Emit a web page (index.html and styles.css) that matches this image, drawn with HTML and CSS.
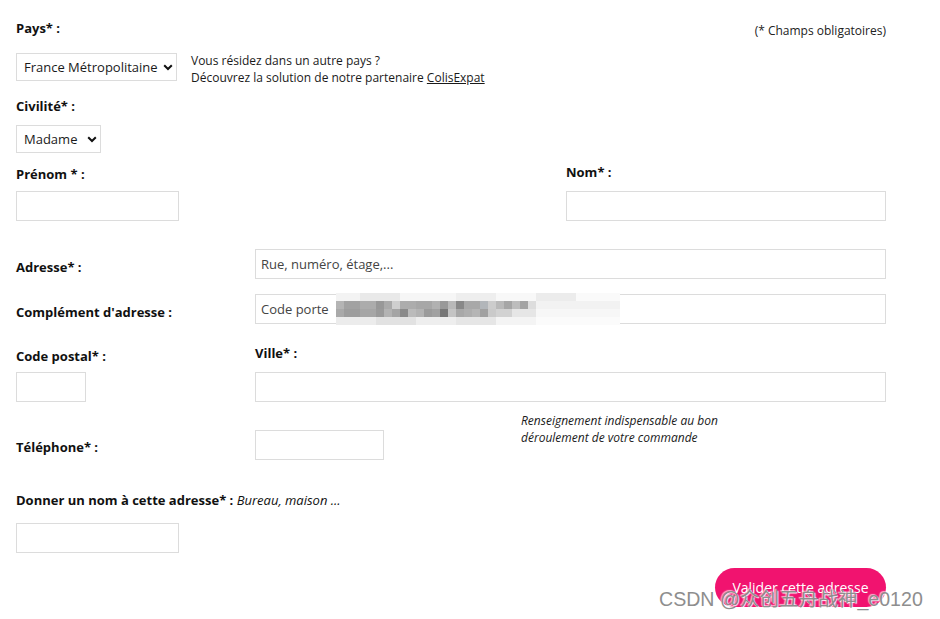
FILE: index.html
```html
<!DOCTYPE html>
<html lang="fr">
<head>
<meta charset="utf-8">
<title>Adresse</title>
<link rel="stylesheet" href="styles.css">
</head>
<body>
<form class="form">
  <div class="head">
    <span class="label">Pays* :</span>
    <span class="required">(* Champs obligatoires)</span>
  </div>

  <div class="country">
    <div class="select select-country">
      <span>France Métropolitaine</span>
      <svg class="chev" width="10" height="7" viewBox="0 0 10 7"><polyline points="1.2,1.2 5,5 8.8,1.2" fill="none" stroke="#111" stroke-width="2"/></svg>
    </div>
    <p class="abroad">Vous résidez dans un autre pays ?<br>Découvrez la solution de notre partenaire <a href="#">ColisExpat</a></p>
  </div>

  <div class="label civ">Civilité* :</div>
  <div class="select select-civ">
    <span>Madame</span>
    <svg class="chev" width="10" height="7" viewBox="0 0 10 7"><polyline points="1.2,1.2 5,5 8.8,1.2" fill="none" stroke="#111" stroke-width="2"/></svg>
  </div>

  <div class="names">
    <div class="field">
      <div class="label label-prenom">Prénom * :</div>
      <input class="input w-name" type="text">
    </div>
    <div class="field">
      <div class="label label-nom">Nom* :</div>
      <input class="input w-nom" type="text">
    </div>
  </div>

  <div class="row row-address">
    <div class="label row-label">Adresse* :</div>
    <input class="input w-full" type="text" placeholder="Rue, numéro, étage,...">
  </div>

  <div class="row row-compl">
    <div class="label row-label">Complément d'adresse :</div>
    <div class="compl">
      <input class="input w-full" type="text" placeholder="Code porte">
      <div class="blur">
        <div class="b b1"></div>
        <div class="b b2"></div>
        <div class="b b3"></div>
        <div class="b b4"></div>
      </div>
    </div>
  </div>

  <div class="row row-city">
    <div class="field">
      <div class="label label-cp">Code postal* :</div>
      <input class="input w-cp" type="text">
    </div>
    <div class="field">
      <div class="label label-ville">Ville* :</div>
      <input class="input w-full" type="text">
    </div>
  </div>

  <div class="row-phone">
    <div class="label phone-label">Téléphone* :</div>
    <input class="input w-phone" type="text">
    <p class="note">Renseignement indispensable au bon<br>déroulement de votre commande</p>
  </div>

  <div class="label alias-label">Donner un nom à cette adresse* : <em>Bureau, maison ...</em></div>
  <input class="input w-name" type="text">

  <div class="actions">
    <button class="btn" type="button">Valider cette adresse</button>
  </div>
</form>
<div class="wm">CSDN @众创五舟战神_e0120</div>
</body>
</html>
```

FILE: styles.css
```css
* { box-sizing: border-box; }

html, body {
  margin: 0;
  padding: 0;
  background: #fff;
}

body {
  font-family: "Open Sans", "Noto Sans", sans-serif;
  color: #1a1a1a;
  width: 940px;
  height: 619px;
  overflow: hidden;
  position: relative;
}

.form {
  width: 886px;
  padding: 19px 0 0 16px;
}

.label {
  font-size: 13px;
  font-weight: 700;
  line-height: 18px;
  color: #111;
}

.head {
  display: flex;
  justify-content: space-between;
  align-items: flex-start;
  height: 18px;
}

.required {
  font-size: 12px;
  line-height: 16px;
  margin-top: 4px;
  color: #222;
}

.country {
  display: flex;
  align-items: flex-start;
  margin-top: 16px;
}

.select {
  height: 28px;
  border: 1px solid #dcdcdc;
  display: flex;
  align-items: center;
  justify-content: space-between;
  padding: 0 3px 0 7px;
  font-size: 13px;
  color: #1a1a1a;
  background: #fff;
}

.chev { display: block; }

.select-country { width: 161px; }
.select-civ { width: 85px; margin-top: 10px; }

.abroad {
  margin: -1px 0 0 14px;
  font-size: 12px;
  line-height: 17px;
  color: #1a1a1a;
}

.abroad a { color: #1a1a1a; text-decoration: underline; }

.civ { margin-top: 11px; }

.input {
  display: block;
  height: 30px;
  border: 1px solid #dcdcdc;
  border-radius: 0;
  padding: 0 5px;
  font-family: "Open Sans", "Noto Sans", sans-serif;
  font-size: 13px;
  color: #333;
  background: #fff;
  outline: none;
  margin: 0;
}

.input::placeholder { color: #444; opacity: 1; }

.w-name { width: 163px; }
.w-full { width: 631px; }
.w-nom { width: 320px; }
.w-cp { width: 70px; }
.w-phone { width: 129px; }

.names {
  display: grid;
  grid-template-columns: 550px 320px;
  margin-top: 12px;
}

.label-prenom { margin-bottom: 8px; }
.label-nom { margin-top: -2px; margin-bottom: 10px; }

.row {
  display: grid;
  grid-template-columns: 239px 631px;
  align-items: start;
}

.row-label { margin-top: 9px; }

.row-address { margin-top: 28px; }
.row-compl { margin-top: 15px; }

.compl { position: relative; }

.blur {
  position: absolute;
  left: 81px;
  top: -1px;
  width: 284px;
  height: 32px;
  display: flex;
  flex-direction: column;
}

.b { height: 8px; }

.b1 {
  background: linear-gradient(90deg,
    #f3f3f3 0 24px, #e9e9e9 24px 64px, #f6f6f6 64px 120px, #eeeeee 120px 160px,
    #f8f8f8 160px 200px, #ececec 200px 240px, #fafafa 240px 284px);
}
.b2 {
  background: linear-gradient(90deg,
    #b4b4b4 0 8px, #a2a2a2 8px 24px, #acacac 24px 40px, #989898 40px 48px, #aaaaaa 48px 56px,
    #cfcfcf 56px 64px, #acacac 64px 80px, #a7a7a7 80px 96px, #b1b1b1 96px 104px, #999 104px 112px,
    #b8b8b8 112px 120px, #888 120px 128px, #a8a8a8 128px 144px, #b2b6ba 144px 152px, #cccccc 152px 160px,
    #b9b9b9 160px 168px, #a6a6a6 168px 176px, #bdbdbd 176px 184px, #a3a3a3 184px 192px, #dddddd 192px 200px,
    #f2f2f2 200px 284px);
}
.b3 {
  background: linear-gradient(90deg,
    #a9a9a9 0 8px, #9d9d9d 8px 24px, #a6a6a6 24px 40px, #9a9a9a 40px 48px, #b3b3b3 48px 56px,
    #a5a5a5 56px 64px, #8a8a8a 64px 72px, #bbbbbb 72px 80px, #b3b3b3 80px 88px, #9b9b9b 88px 96px,
    #a1a1a1 96px 104px, #777 104px 112px, #c4c4c4 112px 120px, #a8a8a8 120px 128px, #aeaeae 128px 136px,
    #b5b5b5 136px 144px, #a1a1a1 144px 152px, #cacaca 152px 160px, #d2d2d2 160px 176px,
    #e6e6e6 176px 200px, #f7f7f7 200px 284px);
}
.b4 {
  background: linear-gradient(90deg,
    #ececec 0 40px, #e2e2e2 40px 80px, #eeeeee 80px 120px, #e6e6e6 120px 160px,
    #f4f4f4 160px 200px, #fbfbfb 200px 284px);
}

.row-city { margin-top: 20px; }
.row-city .label-cp { margin-top: 3px; margin-bottom: 7px; }
.row-city .label-ville { margin-bottom: 10px; }

.row-phone {
  display: grid;
  grid-template-columns: 239px 266px 1fr;
  align-items: start;
  margin-top: 10px;
}

.phone-label { margin-top: 26px; }
.row-phone .input { margin-top: 18px; }

.note {
  margin: 0;
  font-size: 12px;
  font-style: italic;
  line-height: 17px;
  color: #1a1a1a;
}

.alias-label { margin-top: 31px; margin-bottom: 14px; }
.alias-label em { font-weight: 400; font-size: 13px; }

.actions {
  display: flex;
  justify-content: flex-end;
  margin-top: 15px;
}

.btn {
  width: 171px;
  height: 39px;
  border: 0;
  border-radius: 20px;
  background: #f1136f;
  color: #fff;
  font-family: "Open Sans", "Noto Sans", sans-serif;
  font-size: 14px;
  padding: 0;
}

.wm {
  position: absolute;
  left: 659px;
  top: 587px;
  font-family: "Liberation Sans", "Noto Sans CJK SC", sans-serif;
  font-size: 19.6px;
  line-height: 24px;
  color: #8e8e8e;
  text-shadow: 1px 1px 1px #fff, -1px -1px 1px rgba(255,255,255,0.7);
  white-space: nowrap;
}
```
